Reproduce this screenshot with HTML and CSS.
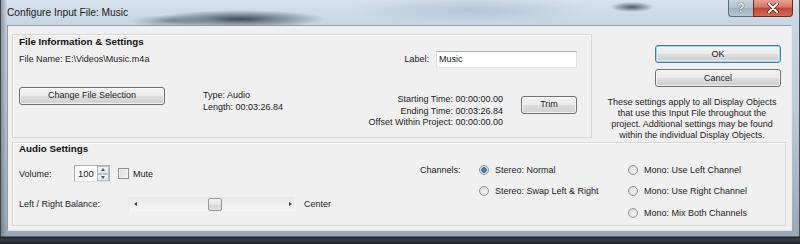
FILE: index.html
```html
<!DOCTYPE html>
<html lang="en">
<head>
    <meta charset="UTF-8">
    <title>Configure Input File: Music</title>
    <link rel="stylesheet" href="styles.css">
</head>
<body>
    <div class="window">
        <div class="titlebar">
            <span class="title">Configure Input File: Music</span>
            <div class="caption-buttons">
                <span class="cap help">?</span>
                <span class="cap close">
                    <svg width="12" height="10" viewBox="0 0 12 10">
                        <path d="M2 1 L10 9 M10 1 L2 9" stroke="#5a2018" stroke-width="3.4" stroke-linecap="round"/>
                        <path d="M2 1 L10 9 M10 1 L2 9" stroke="#ffffff" stroke-width="2" stroke-linecap="round"/>
                    </svg>
                </span>
            </div>
        </div>

        <div class="client">
            <div class="top-row">
                <section class="group file-group">
                    <h2>File Information &amp; Settings</h2>
                    <div class="name-row">
                        <span>File Name: E:\Videos\Music.m4a</span>
                        <span class="label-field">Label: <span class="textbox">Music</span></span>
                    </div>
                    <div class="info-row">
                        <span class="btn change">Change File Selection</span>
                        <div class="type-info">
                            <div>Type: Audio</div>
                            <div>Length: 00:03:26.84</div>
                        </div>
                        <div class="times">
                            <div>Starting Time: 00:00:00.00</div>
                            <div>Ending Time: 00:03:26.84</div>
                            <div>Offset Within Project: 00:00:00.00</div>
                        </div>
                        <span class="btn trim">Trim</span>
                    </div>
                </section>

                <aside class="actions">
                    <span class="btn ok">OK</span>
                    <span class="btn cancel">Cancel</span>
                    <p class="note">These settings apply to all Display Objects<br>that use this Input File throughout the<br>project. Additional settings may be found<br>within the individual Display Objects.</p>
                </aside>
            </div>

            <section class="group audio-group">
                <h2>Audio Settings</h2>
                <div class="audio-body">
                    <div class="audio-left">
                        <div class="vol-row">
                            <span class="vol-label">Volume:</span>
                            <span class="spinner">
                                <span class="spin-value">100</span>
                                <span class="spin-buttons">
                                    <span class="spin up"></span>
                                    <span class="spin down"></span>
                                </span>
                            </span>
                            <span class="checkbox"></span>
                            <span class="mute">Mute</span>
                        </div>
                        <div class="bal-row">
                            <span class="bal-label">Left / Right Balance:</span>
                            <span class="slider">
                                <span class="arrow left"></span>
                                <span class="thumb"></span>
                                <span class="arrow right"></span>
                            </span>
                            <span class="bal-value">Center</span>
                        </div>
                    </div>

                    <div class="channels">
                        <span>Channels:</span>
                        <span class="option"><span class="radio checked"></span>Stereo: Normal</span>
                        <span class="option"><span class="radio"></span>Mono: Use Left Channel</span>
                        <span></span>
                        <span class="option"><span class="radio"></span>Stereo: Swap Left &amp; Right</span>
                        <span class="option"><span class="radio"></span>Mono: Use Right Channel</span>
                        <span></span>
                        <span></span>
                        <span class="option"><span class="radio"></span>Mono: Mix Both Channels</span>
                    </div>
                </div>
            </section>
        </div>
    </div>
</body>
</html>
```

FILE: styles.css
```css
/* Base */
* {
    box-sizing: border-box;
}

body {
    margin: 0;
    font-family: "Liberation Sans", Arial, sans-serif;
    font-size: 9px;
    color: #1c1c1c;
    background: #2b3138;
}

/* Aero window frame */
.window {
    width: 800px;
    height: 244px;
    display: flex;
    flex-direction: column;
    background:
        radial-gradient(ellipse 85px 9px at 240px 19px, rgba(40, 52, 66, 0.85), rgba(40, 52, 66, 0) 100%),
        radial-gradient(ellipse 40px 6px at 170px 21px, rgba(70, 85, 100, 0.5), rgba(70, 85, 100, 0) 100%),
        radial-gradient(ellipse 22px 5px at 632px 7px, rgba(45, 55, 70, 0.8), rgba(45, 55, 70, 0) 100%),
        radial-gradient(ellipse 120px 14px at 470px 10px, rgba(150, 175, 200, 0.5), rgba(150, 175, 200, 0) 100%),
        linear-gradient(to bottom, rgba(0, 0, 0, 0) 236px, #1d242b 237px, #39424c 240px, #141a20 244px),
        linear-gradient(to right, #3e464f 0, #3e464f 1px, rgba(90, 98, 108, 0.55) 1px, rgba(150, 160, 170, 0.25) 6px, rgba(0, 0, 0, 0) 7px, rgba(0, 0, 0, 0) 799px, #4a525c 799px),
        linear-gradient(to bottom, #d6e2ec 0, #c7d6e3 24px, #bccbd8 110px, #9aa9b7 236px);
}

.titlebar {
    height: 25px;
    display: flex;
    align-items: flex-start;
    padding-left: 7px;
}

.title {
    font-size: 10.2px;
    line-height: 26px;
    color: #1a1a1a;
}

.caption-buttons {
    margin-left: auto;
    margin-right: 7px;
    display: flex;
    height: 17px;
}

.cap {
    display: flex;
    align-items: center;
    justify-content: center;
    height: 17px;
    border: 1px solid #5d6c7a;
    border-top: none;
}

.help {
    width: 25px;
    border-radius: 0 0 0 4px;
    border-right: none;
    background: linear-gradient(to bottom, #c9d6e2, #aebfcf 50%, #9fb1c2 51%, #b9c8d6);
    color: #eef3f7;
    font-size: 12px;
    font-weight: bold;
    text-shadow: 0 0 1px #3a4856, 0 0 1px #3a4856;
}

.close {
    width: 40px;
    border-radius: 0 0 4px 0;
    border-color: #6c2a22;
    background: linear-gradient(to bottom, #e6a294, #d27767 45%, #c24334 50%, #d46a55 100%);
}

/* Client area */
.client {
    flex: 1;
    margin: 0 8px 13px 7px;
    border: 1px solid #8c9cab;
    border-right-color: #e4ecf2;
    border-bottom-color: #dbe4ec;
    background: #f0f0f0;
    padding: 8px 0 0 4px;
}

.top-row {
    display: flex;
    height: 108px;
}

.group {
    border: 1px solid #d7d7d7;
    box-shadow: inset 1px 1px 0 #fbfbfb;
}

.group h2 {
    margin: 0;
    font-size: 9.8px;
    font-weight: bold;
    color: #111;
}

.file-group {
    width: 580px;
    height: 104px;
    padding: 1px 14px 0 6px;
}

.file-group h2 {
    line-height: 12px;
}

.name-row {
    margin-top: 2px;
    height: 18px;
    display: flex;
    align-items: center;
    justify-content: space-between;
}

.label-field {
    display: flex;
    align-items: center;
}

.textbox {
    margin-left: 7px;
    width: 141px;
    height: 17px;
    line-height: 15px;
    padding-left: 2px;
    background: #fff;
    border: 1px solid #dde1e7;
    border-top-color: #abadb3;
}

.info-row {
    margin-top: 19px;
    display: flex;
    align-items: flex-start;
    line-height: 11.5px;
}

/* Win7 push buttons */
.btn {
    display: flex;
    align-items: center;
    justify-content: center;
    height: 18px;
    border: 1px solid #707070;
    border-radius: 3px;
    background: linear-gradient(to bottom, #f2f2f2 0, #ebebeb 50%, #dddddd 51%, #cfcfcf 100%);
    box-shadow: inset 0 0 0 1px rgba(255, 255, 255, 0.7);
    color: #1a1a1a;
}

.change {
    width: 146px;
}

.type-info {
    margin-left: 38px;
    margin-top: 3px;
}

.times {
    margin-left: auto;
    margin-top: 7px;
    text-align: right;
}

.trim {
    margin-left: 18px;
    margin-top: 9px;
    width: 56px;
}

/* OK / Cancel column */
.actions {
    width: 194px;
    padding-top: 11px;
    display: flex;
    flex-direction: column;
}

.actions .btn {
    margin-left: 63px;
    width: 126px;
}

.ok {
    border-color: #3c7fb1;
    box-shadow: inset 0 0 0 1px #9fd8f5, inset 0 0 0 2px rgba(255, 255, 255, 0.4);
}

.cancel {
    margin-top: 6px;
}

.note {
    margin: 10px 0 0 8px;
    width: 184px;
    line-height: 11px;
    text-align: center;
}

/* Audio settings */
.audio-group {
    width: 774px;
    height: 84px;
    padding-left: 6px;
}

.audio-group h2 {
    line-height: 11px;
}

.audio-body {
    display: flex;
    align-items: flex-start;
}

.audio-left {
    width: 401px;
    padding-top: 11px;
}

.vol-row {
    height: 17px;
    display: flex;
    align-items: center;
}

.vol-label {
    width: 55px;
}

.spinner {
    width: 36px;
    height: 17px;
    display: flex;
    background: #fff;
    border: 1px solid #abadb3;
    border-bottom-color: #dde1e7;
}

.spin-value {
    flex: 1;
    line-height: 15px;
    padding-left: 3px;
    font-size: 9.5px;
}

.spin-buttons {
    width: 12px;
    display: flex;
    flex-direction: column;
}

.spin {
    flex: 1;
    display: flex;
    align-items: center;
    justify-content: center;
    border: 1px solid #b9bfc6;
    background: linear-gradient(to bottom, #f6f6f6, #e3e3e3);
}

.spin::after {
    content: "";
    border-left: 2.5px solid transparent;
    border-right: 2.5px solid transparent;
}

.up::after {
    border-bottom: 3px solid #4d5a6a;
}

.down::after {
    border-top: 3px solid #4d5a6a;
}

.checkbox {
    margin-left: 8px;
    width: 11px;
    height: 11px;
    border: 1px solid #8e8f8f;
    background: linear-gradient(135deg, #d9d9d9, #f5f5f5);
    box-shadow: inset 0 0 0 1px #f4f4f4;
}

.mute {
    margin-left: 4px;
}

.bal-row {
    margin-top: 14px;
    height: 16px;
    display: flex;
    align-items: center;
}

.bal-label {
    width: 109px;
}

.slider {
    width: 167px;
    height: 14px;
    display: flex;
    align-items: center;
    background: linear-gradient(to bottom, #e9e9e9, #f5f5f5);
    border-left: 1px solid #eaeaea;
}

.arrow {
    border-top: 2.5px solid transparent;
    border-bottom: 2.5px solid transparent;
}

.arrow.left {
    margin-left: 5px;
    border-right: 3px solid #3e3e3e;
}

.arrow.right {
    margin-left: auto;
    margin-right: 3px;
    border-left: 3px solid #3e3e3e;
}

.thumb {
    margin-left: 71px;
    width: 14px;
    height: 13px;
    border: 1px solid #979797;
    border-radius: 2px;
    background: linear-gradient(to bottom, #f3f3f3, #e6e6e6 50%, #d6d6d6 51%, #e2e2e2);
}

.bal-value {
    margin-left: 9px;
}

.channels {
    margin-top: 5px;
    display: grid;
    grid-template-columns: 59px 149px 150px;
    grid-auto-rows: 21.5px;
    align-items: center;
}

.option {
    display: flex;
    align-items: center;
}

.radio {
    width: 10px;
    height: 10px;
    margin-right: 6px;
    border: 1px solid #929292;
    border-radius: 50%;
    background: radial-gradient(circle at 60% 60%, #f6f6f6, #d4d4d4);
}

.radio.checked {
    background: radial-gradient(circle, #5fa2dd 0, #2a62a6 2.5px, #e8e8e8 3px, #d4d4d4 5px);
}
```
